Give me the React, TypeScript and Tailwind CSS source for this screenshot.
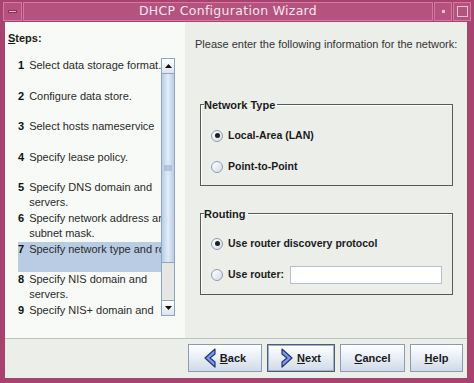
import React from "react";

const steps: { n: string; lines: string[] }[] = [
  { n: "1", lines: ["Select data storage format."] },
  { n: "2", lines: ["Configure data store."] },
  { n: "3", lines: ["Select hosts nameservice"] },
  { n: "4", lines: ["Specify lease policy."] },
  { n: "5", lines: ["Specify DNS domain and", "servers."] },
  { n: "6", lines: ["Specify network address and", "subnet mask."] },
  { n: "7", lines: ["Specify network type and routing."] },
  { n: "8", lines: ["Specify NIS domain and", "servers."] },
  { n: "9", lines: ["Specify NIS+ domain and"] },
];

function Radio({ checked }: { checked?: boolean }) {
  return (
    <span className="w-[12px] h-[12px] rounded-full border border-[#8e9cb0] bg-gradient-to-br from-[#ffffff] to-[#d4dce6] flex items-center justify-center shrink-0">
      {checked && <span className="w-[5px] h-[5px] rounded-full bg-[#1e1e1e]" />}
    </span>
  );
}

function Chevron({ left }: { left?: boolean }) {
  return (
    <svg width="12" height="20" viewBox="0 0 12 20" className={left ? "" : "-scale-x-100"}>
      <polygon points="11,1 1,10 11,19 11,14 6,10 11,6" fill="#7d9be0" stroke="#27337a" strokeWidth="1.2" strokeLinejoin="round" />
    </svg>
  );
}

function Btn({ children, focus, w }: { children: React.ReactNode; focus?: boolean; w: string }) {
  return (
    <button
      className={`${w} h-[28px] flex items-center justify-center gap-[4px] text-[11px] font-bold text-[#1a1a1a] bg-gradient-to-b from-[#ffffff] via-[#e8eef6] to-[#cfd9e6] border ${focus ? "border-[#4e5d76] shadow-[inset_0_0_0_1px_#9fb0c8]" : "border-[#8c9bb2]"}`}
    >
      {children}
    </button>
  );
}

export default function App() {
  return (
    <div className="w-[474px] h-[383px] bg-[#a8426f] flex flex-col overflow-hidden" style={{ fontFamily: '"Liberation Sans", Arial, sans-serif' }}>
      {/* title bar */}
      <div className="h-[22px] flex items-stretch px-[3px] pt-[2px] pb-[1px] gap-[1px] bg-[#a8426f]">
        <div className="w-[19px] bg-[#b5527e] border border-[#d47aa2] flex items-center justify-center">
          <span className="w-[9px] h-[3px] bg-[#e9b4cb] border border-[#8a2f58]" />
        </div>
        <div className="flex-1 bg-[#b5527e] border border-[#d47aa2] flex items-center justify-center text-[12.5px] text-[#f6e6ee] tracking-[0.3px]" style={{ fontFamily: '"DejaVu Sans", sans-serif' }}>
          DHCP Configuration Wizard
        </div>
        <div className="w-[18px] bg-[#b5527e] border border-[#d47aa2] flex items-center justify-center">
          <span className="w-[3px] h-[3px] bg-[#ecc0d3]" />
        </div>
        <div className="w-[18px] bg-[#b5527e] border border-[#d47aa2] flex items-center justify-center">
          <span className="w-[11px] h-[11px] border border-[#ecc0d3]" />
        </div>
      </div>

      {/* body */}
      <div className="flex-1 flex flex-col ml-[5px] mr-[7px] mb-[5px] bg-[#eceeea]">
        <div className="h-[316px] flex">
          {/* steps panel */}
          <div className="w-[180px] bg-[#f8faf7] flex flex-col pl-[3px]">
            <div className="h-[36px] pt-[8px] text-[11px] font-bold text-[#1a1a1a]">
              <span className="underline">S</span>teps:
            </div>
            <div className="flex items-start">
              <div className="w-[153px] h-[263px] overflow-hidden pl-[10px] text-[11px] text-[#2a2a2a]">
                {steps.map((s) => (
                  <div key={s.n} className={`h-[30.6px] flex gap-[5px] whitespace-nowrap leading-[15px] ${s.n === "7" ? "bg-[#b8cde3]" : ""}`}>
                    <span className="font-bold text-[#111]">{s.n}</span>
                    <div className="flex flex-col">
                      {s.lines.map((l) => (
                        <span key={l}>{l}</span>
                      ))}
                    </div>
                  </div>
                ))}
              </div>
              {/* scrollbar */}
              <div className="w-[14px] h-[258px] flex flex-col border border-[#8ea4c4] bg-[#e4e7e4]">
                <div className="h-[15px] border-b border-[#8ea4c4] bg-gradient-to-b from-[#ffffff] to-[#dbe4ee] flex items-center justify-center">
                  <svg width="7" height="4" viewBox="0 0 7 4"><polygon points="0,4 3.5,0 7,4" fill="#111" /></svg>
                </div>
                <div className="h-[189px] border-b border-[#8ea4c4] bg-gradient-to-r from-[#b9cde6] via-[#e2ebf6] to-[#b9cde6] flex items-center justify-center">
                  <svg width="8" height="6" viewBox="0 0 8 6">
                    <path d="M0 1h8M0 3h8M0 5h8" stroke="#8ea4c4" strokeWidth="1" />
                  </svg>
                </div>
                <div className="flex-1" />
                <div className="h-[15px] border-t border-[#8ea4c4] bg-gradient-to-b from-[#ffffff] to-[#dbe4ee] flex items-center justify-center">
                  <svg width="7" height="4" viewBox="0 0 7 4"><polygon points="0,0 3.5,4 7,0" fill="#111" /></svg>
                </div>
              </div>
            </div>
          </div>

          {/* content panel */}
          <div className="flex-1 flex flex-col pl-[10px] pr-[6px]">
            <div className="pt-[14px] text-[11px] text-[#333] whitespace-nowrap">Please enter the following information for the network:</div>
            <fieldset className="mt-[44px] ml-[5px] w-[253px] h-[89px] border border-[#595959] shadow-[inset_1px_1px_0_#ffffff] px-[10px]">
              <legend className="text-[11px] font-bold text-[#1a1a1a] ml-[-7px] pr-[2px]">Network Type</legend>
              <div className="flex flex-col gap-[15px] pt-[15px] text-[10.5px] font-bold text-[#1a1a1a]">
                <label className="flex items-center gap-[5px] whitespace-nowrap"><Radio checked />Local-Area (LAN)</label>
                <label className="flex items-center gap-[5px] whitespace-nowrap"><Radio />Point-to-Point</label>
              </div>
            </fieldset>
            <fieldset className="mt-[20px] ml-[5px] w-[253px] h-[89px] border border-[#595959] shadow-[inset_1px_1px_0_#ffffff] px-[10px]">
              <legend className="text-[11px] font-bold text-[#1a1a1a] ml-[-7px] pr-[2px]">Routing</legend>
              <div className="flex flex-col gap-[14px] pt-[14px] text-[10.5px] font-bold text-[#1a1a1a]">
                <label className="flex items-center gap-[5px] whitespace-nowrap"><Radio checked />Use router discovery protocol</label>
                <label className="flex items-center gap-[5px] whitespace-nowrap">
                  <Radio />
                  <span className="shrink-0">Use router:</span>
                  <span className="ml-[1px] w-[152px] h-[18px] shrink-0 bg-white border border-[#b8bfc8]" />
                </label>
              </div>
            </fieldset>
          </div>
        </div>

        {/* button bar */}
        <div className="flex-1 border-t border-[#bfc3bf] flex items-start justify-end gap-[5px] pt-[5px] pr-[4px]">
          <Btn w="w-[74px]"><Chevron left /><span><span className="underline">B</span>ack</span></Btn>
          <Btn w="w-[68px]" focus><Chevron /><span><span className="underline">N</span>ext</span></Btn>
          <Btn w="w-[65px]"><span><span className="underline">C</span>ancel</span></Btn>
          <Btn w="w-[53px]"><span><span className="underline">H</span>elp</span></Btn>
        </div>
      </div>
    </div>
  );
}
